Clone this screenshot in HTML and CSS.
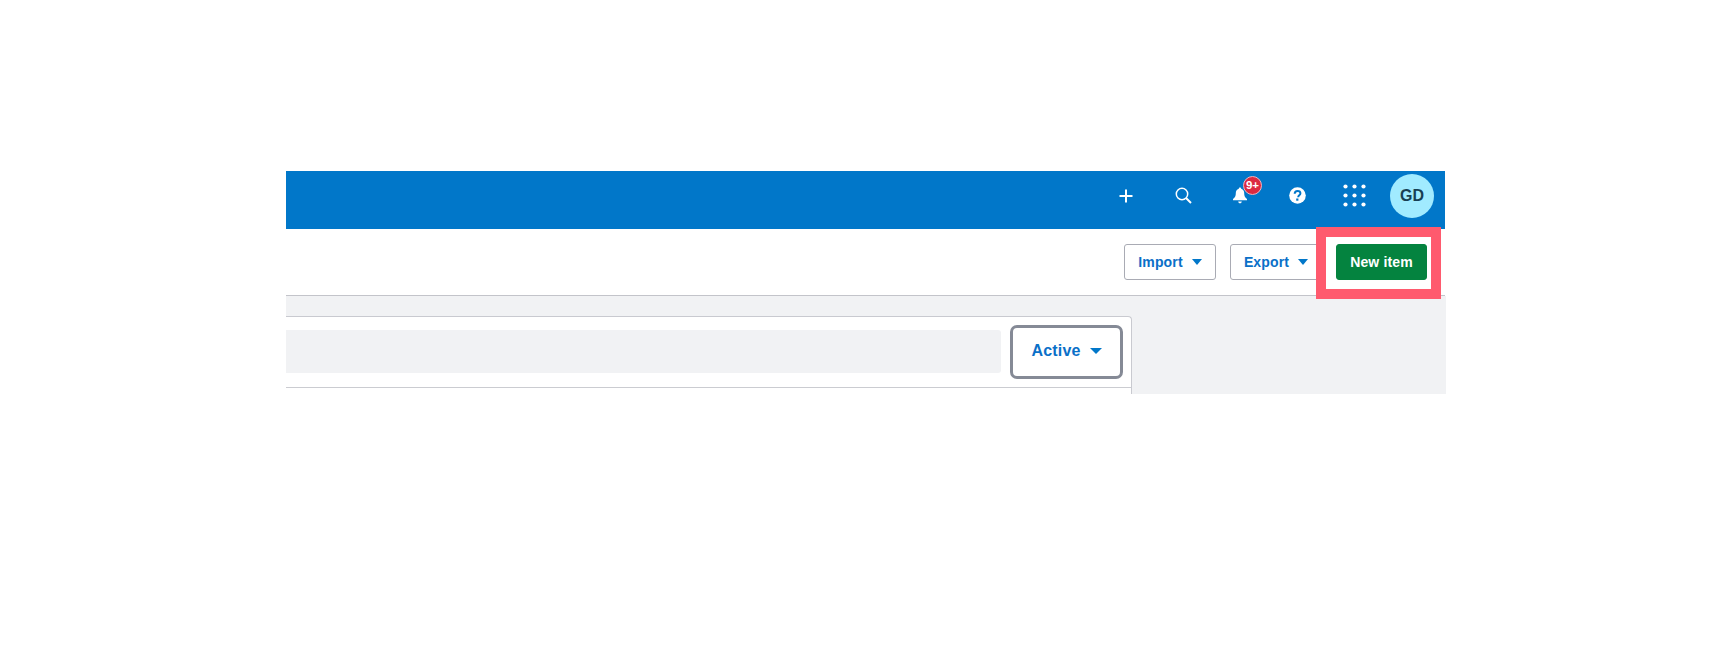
FILE: index.html
```html
<!DOCTYPE html>
<html lang="en">
<head>
<meta charset="utf-8">
<title>Items</title>
<link rel="stylesheet" href="styles.css">
</head>
<body>
<div class="app">
  <header class="topbar">
    <span class="slot slot-plus"><svg width="14" height="14" viewBox="0 0 14 14"><path d="M7 .5v13M.5 7h13" stroke="#fff" stroke-width="2" fill="none"/></svg></span>
    <span class="slot"><svg width="17" height="17" viewBox="0 0 17 17"><circle cx="7" cy="7" r="5.700" stroke="#fff" stroke-width="1.500" fill="none"/><path d="M11 11L16 16" stroke="#fff" stroke-width="1.900" fill="none"/></svg></span>
    <span class="slot slot-bell">
      <svg width="16" height="17" viewBox="0 0 16 17"><path d="M8 .5c.7 0 1.200.5 1.200 1.200 2.200.6 3 2.400 3 4.600 0 2.800.6 4.200 2.800 5.800v1.200H1v-1.200c2.200-1.600 2.800-3 2.800-5.800 0-2.200.8-4 3-4.600C6.800 1 7.300.5 8 .5zM6.200 14.400h3.600C9.700 15.500 9 16.200 8 16.200s-1.700-.7-1.800-1.800z" fill="#fff"/></svg>
      <span class="badge">9+</span>
    </span>
    <span class="slot"><svg width="17" height="17" viewBox="0 0 17 17"><circle cx="8.500" cy="8.500" r="8.300" fill="#fff"/><path d="M5.700 6.700c0-1.600 1.200-2.800 2.900-2.800s2.800 1 2.800 2.400c0 2.100-2.200 2-2.200 3.900" stroke="#0177c9" stroke-width="2" fill="none"/><rect x="7.200" y="11.500" width="2.200" height="2.200" fill="#0177c9"/></svg></span>
    <span class="slot slot-apps"><svg width="23" height="23" viewBox="0 0 23 23" fill="#fff"><circle cx="2.500" cy="2.500" r="2.100"/><circle cx="11.500" cy="2.500" r="2.100"/><circle cx="20.500" cy="2.500" r="2.100"/><circle cx="2.500" cy="11.500" r="2.100"/><circle cx="11.500" cy="11.500" r="2.100"/><circle cx="20.500" cy="11.500" r="2.100"/><circle cx="2.500" cy="20.500" r="2.100"/><circle cx="11.500" cy="20.500" r="2.100"/><circle cx="20.500" cy="20.500" r="2.100"/></svg></span>
    <span class="avatar">GD</span>
  </header>
  <div class="toolbar">
    <button class="btn">Import<i class="caret"></i></button>
    <button class="btn">Export<i class="caret"></i></button>
    <button class="btn btn-primary">New item</button>
    <span class="highlight"></span>
  </div>
  <main class="content">
    <section class="panel">
      <div class="panel-head">
        <div class="search"></div>
        <button class="filter">Active<i class="caret"></i></button>
      </div>
    </section>
  </main>
</div>
</body>
</html>
```
FILE: styles.css
```css
* { box-sizing: border-box; }
html, body { margin: 0; background: #fff; }
body { padding: 171px 0 0 286px; height: 664px; overflow: hidden; font-family: "Liberation Sans", Arial, sans-serif; }
.app { width: 1160px; height: 223px; overflow: hidden; position: relative; }
.topbar { width: 1159px; height: 58px; background: #0177c9; display: flex; align-items: flex-start; justify-content: flex-end; padding: 3px 11px 0 0; }
.slot { width: 57px; height: 43px; display: flex; align-items: center; justify-content: center; position: relative; }
.slot-plus { padding-right: 2px; }
.slot-bell { padding-right: 2px; }
.slot-apps { margin-right: 7px; }
.badge { position: absolute; left: 31px; top: 2px; width: 19px; height: 19px; border-radius: 50%; background: #dc2a41; border: 1px solid #f3b4bd; color: #fff; font-size: 11.500px; font-weight: 700; line-height: 17px; text-align: center; }
.avatar { width: 44px; height: 44px; border-radius: 50%; background: #a1ebff; color: #173f54; font-size: 16px; font-weight: 700; display: flex; align-items: center; justify-content: center; }
.toolbar { width: 1159px; height: 67px; background: #fff; border-bottom: 1px solid #c3c4ca; display: flex; align-items: flex-start; justify-content: flex-end; gap: 14px; padding: 15px 18px 0 0; position: relative; }
.btn { height: 36px; width: 92px; padding: 0; border: 1px solid #a9abb4; border-radius: 3px; background: #fff; color: #0a70c8; font: 700 14px "Liberation Sans", Arial, sans-serif; letter-spacing: .15px; display: flex; align-items: center; justify-content: center; }
.btn-primary { width: 91px; background: #04833f; border-color: #04833f; color: #fff; }
.caret { display: inline-block; width: 0; height: 0; border-left: 5.500px solid transparent; border-right: 5.500px solid transparent; border-top: 6px solid #0177c9; margin-left: 9px; }
.highlight { position: absolute; left: 1030px; top: -2px; width: 125px; height: 72px; border: 10px solid #ff5a6e; z-index: 1; }
.content { height: 98px; background: #f1f2f4; padding-top: 20px; }
.panel { width: 846px; height: 78px; background: #fff; border: 1px solid #c9cad0; border-left: 0; border-bottom: 0; border-top-right-radius: 4px; }
.panel-head { height: 71px; border-bottom: 1px solid #cbccd1; display: flex; align-items: flex-start; padding: 8px 8px 0 0; }
.search { width: 715px; height: 43px; margin-top: 5px; background: #f1f2f4; border-radius: 0 3px 3px 0; }
.filter { width: 113px; height: 54px; margin-left: 9px; border: 3px solid #858a96; border-radius: 7px; background: #fff; color: #0a70c8; font: 700 16px "Liberation Sans", Arial, sans-serif; letter-spacing: .2px; display: flex; align-items: center; justify-content: center; padding: 0 0 2px; }
.filter .caret { border-left-width: 6px; border-right-width: 6px; }
```
